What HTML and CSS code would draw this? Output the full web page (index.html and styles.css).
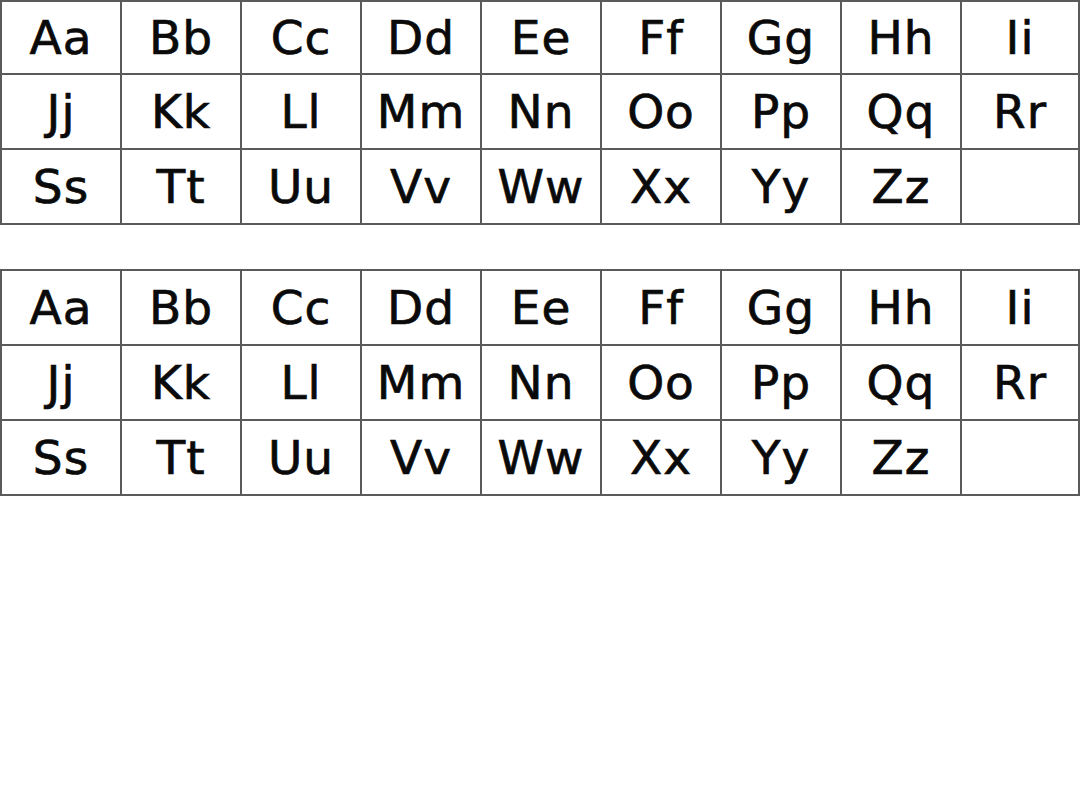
FILE: index.html
```html
<!DOCTYPE html>
<html>
<head>
<meta charset="utf-8">
<link rel="stylesheet" href="styles.css">
</head>
<body>
<div class="sheet first">
  <div class="cell">Aa</div><div class="cell">Bb</div><div class="cell">Cc</div><div class="cell">Dd</div><div class="cell">Ee</div><div class="cell">Ff</div><div class="cell">Gg</div><div class="cell">Hh</div><div class="cell">Ii</div>
  <div class="cell">Jj</div><div class="cell">Kk</div><div class="cell">Ll</div><div class="cell">Mm</div><div class="cell">Nn</div><div class="cell">Oo</div><div class="cell">Pp</div><div class="cell">Qq</div><div class="cell">Rr</div>
  <div class="cell">Ss</div><div class="cell">Tt</div><div class="cell">Uu</div><div class="cell">Vv</div><div class="cell">Ww</div><div class="cell">Xx</div><div class="cell">Yy</div><div class="cell">Zz</div><div class="cell"></div>
</div>
<div class="sheet second">
  <div class="cell">Aa</div><div class="cell">Bb</div><div class="cell">Cc</div><div class="cell">Dd</div><div class="cell">Ee</div><div class="cell">Ff</div><div class="cell">Gg</div><div class="cell">Hh</div><div class="cell">Ii</div>
  <div class="cell">Jj</div><div class="cell">Kk</div><div class="cell">Ll</div><div class="cell">Mm</div><div class="cell">Nn</div><div class="cell">Oo</div><div class="cell">Pp</div><div class="cell">Qq</div><div class="cell">Rr</div>
  <div class="cell">Ss</div><div class="cell">Tt</div><div class="cell">Uu</div><div class="cell">Vv</div><div class="cell">Ww</div><div class="cell">Xx</div><div class="cell">Yy</div><div class="cell">Zz</div><div class="cell"></div>
</div>
</body>
</html>
```

FILE: styles.css
```css
html, body {
  margin: 0;
  padding: 0;
  background: #ffffff;
}

body {
  font-family: "DejaVu Sans", "Liberation Sans", sans-serif;
  color: #0a0a0a;
}

.sheet {
  display: grid;
  grid-template-columns: repeat(8, 120px) 118px;
  width: 1080px;
  box-sizing: border-box;
  border-left: 2px solid #5a5a5a;
  border-top: 2px solid #5a5a5a;
}

.sheet.first {
  grid-template-rows: 73px 75px 75px;
}

.sheet.second {
  grid-template-rows: 75px 75px 75px;
  margin-top: 44px;
}

.cell {
  box-sizing: border-box;
  border-right: 2px solid #5a5a5a;
  border-bottom: 2px solid #5a5a5a;
  display: flex;
  align-items: center;
  justify-content: center;
  font-size: 47px;
  line-height: 1;
  letter-spacing: 1px;
  -webkit-text-stroke: 0.7px #0a0a0a;
}
```
